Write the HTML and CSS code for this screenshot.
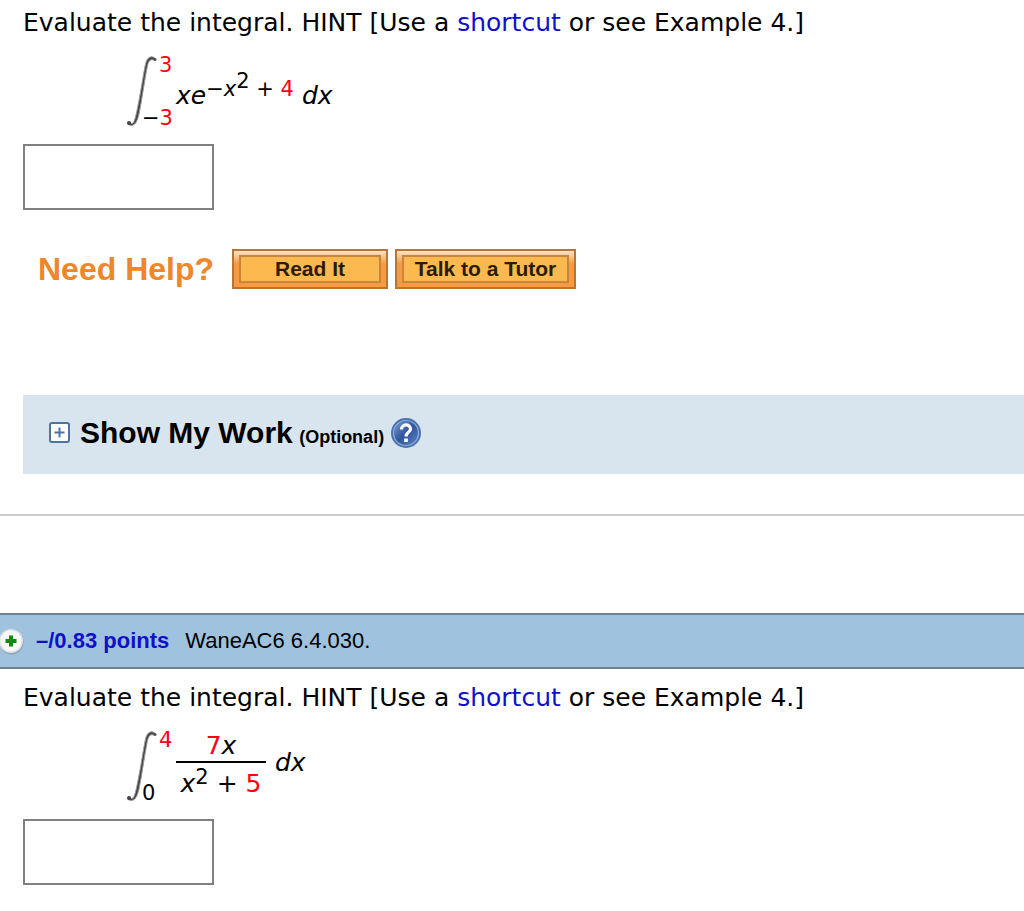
FILE: index.html
```html
<!DOCTYPE html>
<html lang="en">
<head>
    <meta charset="UTF-8">
    <meta name="viewport" content="width=device-width, initial-scale=1.0">
    <title>WaneAC6 6.4</title>
    <link rel="stylesheet" href="styles.css">
</head>
<body>
    <section class="question first">
        <p class="prompt">Evaluate the integral. HINT [Use a <a href="#shortcut">shortcut</a> or see Example 4.]</p>
        <div class="formula">
            <svg class="integral" width="30" height="71" viewBox="0 0 30 71">
                <path d="M28.500 2.500C25 -.5 20.500 0 18.500 8C16.500 17 14 35 10.500 52C8.500 62 7 68 4.500 67.500L1.500 65.500L1 68.500C6 71 9.500 69 12 58C15 44 17 27 20 12C21.500 4 23.500 2.500 28 4.500Z" fill="#444" stroke="#999" stroke-width="1"/>
                <circle cx="28" cy="3.500" r="1.500" fill="#555"/>
                <circle cx="2" cy="67" r="2" fill="#444"/>
            </svg>
            <div class="limits">
                <span class="upper red">3</span>
                <span class="lower">−<span class="red">3</span></span>
            </div>
            <div class="integrand"><i>xe</i><span class="exponent">−<i>x</i><span class="power">2</span> + <span class="red">4</span></span> <i>dx</i></div>
        </div>
        <input class="answer" type="text" aria-label="Answer to question 1">
        <div class="help">
            <span class="help-title">Need Help?</span>
            <button class="help-btn" type="button"><span>Read It</span></button>
            <button class="help-btn tutor" type="button"><span>Talk to a Tutor</span></button>
        </div>
        <div class="work">
            <button class="icon-btn" type="button" aria-label="Expand">
                <svg width="22" height="22" viewBox="0 0 22 22">
                    <rect x="2" y="1" width="19" height="19" rx="2" fill="#fff" stroke="#4a75a3" stroke-width="2"/>
                    <path d="M11.500 5.500V15.500M6.500 10.500H16.500" stroke="#4a75a3" stroke-width="2"/>
                </svg>
            </button>
            <h2>Show My Work <small>(Optional)</small></h2>
            <button class="icon-btn info" type="button" aria-label="Help">
                <svg width="30" height="30" viewBox="0 0 30 30">
                    <defs>
                        <linearGradient id="ball" x1="0" y1="0" x2="1" y2="1">
                            <stop offset="0" stop-color="#7d9fd0"/>
                            <stop offset=".5" stop-color="#2f559c"/>
                            <stop offset="1" stop-color="#5f86c2"/>
                        </linearGradient>
                    </defs>
                    <circle cx="15" cy="15" r="15" fill="#4a72ae"/>
                    <circle cx="15" cy="15" r="12.500" fill="url(#ball)" stroke="#8fabd4" stroke-width="1.200"/>
                    <path d="M10.500 11.500C10.500 5.500 19.500 5.500 19.500 11C19.500 14.500 15 14 15 18.500" fill="none" stroke="#fff" stroke-width="3.200"/>
                    <rect x="13.200" y="20.500" width="3.600" height="3.500" fill="#fff"/>
                </svg>
            </button>
        </div>
    </section>

    <header class="question-header">
        <button class="icon-btn" type="button" aria-label="Add">
            <svg width="24" height="27" viewBox="0 0 24 27">
                <circle cx="11.500" cy="14.500" r="12" fill="#8ba4b8"/>
                <circle cx="11" cy="13" r="12" fill="#dfe1e1"/>
                <circle cx="11" cy="13" r="10.500" fill="#f8f8f6"/>
                <path d="M11 7.500V18.500M5.500 13H16.500" stroke="#128a12" stroke-width="4"/>
            </svg>
        </button>
        <a class="points" href="#points">–/0.83 points</a>
        <span>WaneAC6 6.4.030.</span>
    </header>

    <section class="question second">
        <p class="prompt">Evaluate the integral. HINT [Use a <a href="#shortcut">shortcut</a> or see Example 4.]</p>
        <div class="formula">
            <svg class="integral" width="30" height="71" viewBox="0 0 30 71">
                <path d="M28.500 2.500C25 -.5 20.500 0 18.500 8C16.500 17 14 35 10.500 52C8.500 62 7 68 4.500 67.500L1.500 65.500L1 68.500C6 71 9.500 69 12 58C15 44 17 27 20 12C21.500 4 23.500 2.500 28 4.500Z" fill="#444" stroke="#999" stroke-width="1"/>
                <circle cx="28" cy="3.500" r="1.500" fill="#555"/>
                <circle cx="2" cy="67" r="2" fill="#444"/>
            </svg>
            <div class="limits">
                <span class="upper red">4</span>
                <span class="lower">0</span>
            </div>
            <div class="fraction">
                <div class="numerator"><span class="red">7</span><i>x</i></div>
                <div class="denominator"><i>x</i><span class="power">2</span> + <span class="red">5</span></div>
            </div>
            <i class="dx">dx</i>
        </div>
        <input class="answer" type="text" aria-label="Answer to question 2">
    </section>
</body>
</html>
```

FILE: styles.css
```css
* {
    box-sizing: border-box;
}

body {
    margin: 0;
    background-color: #fff;
    color: #000;
    font-family: Verdana, "DejaVu Sans", sans-serif;
    font-size: 25px;
}

a {
    color: #1010cc;
    text-decoration: none;
}

.red {
    color: #ff0012;
}

.question {
    padding: 8px 0 26px 23px;
}

.question.first {
    padding-bottom: 40px;
    border-bottom: 2px solid #ccc;
}

.question.second {
    padding-top: 14px;
}

.prompt {
    margin: 0;
    line-height: 30px;
}

.formula {
    display: flex;
    height: 71px;
    margin: 18px 0 17px 104px;
}

.integral {
    flex: none;
}

/* the lower limit tucks in under the slope of the sign */
.limits {
    display: flex;
    flex-direction: column;
    justify-content: space-between;
    width: 34px;
    margin-left: -15px;
    font-size: 21px;
    line-height: 18px;
}

.upper {
    padding-left: 17px;
}

.integrand {
    line-height: 30px;
    padding-top: 25px;
    white-space: nowrap;
}

.exponent {
    font-size: 21px;
    line-height: 0;
    vertical-align: 8px;
}

.power {
    font-size: 21px;
    line-height: 0;
    vertical-align: 8px;
}

.fraction {
    align-self: flex-start;
    width: 90px;
    text-align: center;
    line-height: 30px;
}

.numerator {
    border-bottom: 2px solid #000;
}

.denominator {
    padding-top: 6px;
}

.dx {
    margin-left: 9px;
    line-height: 30px;
    padding-top: 17px;
}

.answer {
    display: block;
    width: 191px;
    height: 66px;
    padding: 4px 8px;
    border: 2px solid #808080;
    font: inherit;
}

.help {
    display: flex;
    align-items: center;
    margin: 39px 0 106px 15px;
    font-family: Arial, "Liberation Sans", sans-serif;
    font-weight: bold;
}

.help-title {
    width: 194px;
    color: #ee8729;
    font-size: 32px;
    line-height: 40px;
}

.help-btn {
    width: 156px;
    height: 40px;
    margin-right: 7px;
    padding: 4px 5px;
    border: 2px solid #b87635;
    background: linear-gradient(#fde3c8, #f99a40 35%);
    color: #2b1d05;
    font-family: inherit;
    font-size: 21px;
    font-weight: bold;
    cursor: pointer;
}

.help-btn.tutor {
    width: 181px;
}

.help-btn span {
    display: block;
    border: 2px solid #c3873f;
    background-color: #fbb94f;
    line-height: 24px;
}

.work {
    display: flex;
    align-items: center;
    height: 79px;
    padding: 0 25px 4px;
    background-color: #d9e5ee;
    font-family: Arial, "Liberation Sans", sans-serif;
}

.work h2 {
    margin: 0 7px 0 10px;
    font-size: 30px;
}

.work small {
    font-size: 18px;
    margin-left: -2px;
}

.icon-btn {
    display: flex;
    padding: 0;
    border: none;
    background: none;
    cursor: pointer;
}

.question-header {
    display: flex;
    align-items: center;
    height: 56px;
    margin-top: 97px;
    border-top: 2px solid #6d8292;
    border-bottom: 2px solid #6d8292;
    background-color: #9fc2de;
    font-family: Arial, "Liberation Sans", sans-serif;
    font-size: 22px;
}

.points {
    margin: 0 16px 0 12px;
    font-weight: bold;
}
```
